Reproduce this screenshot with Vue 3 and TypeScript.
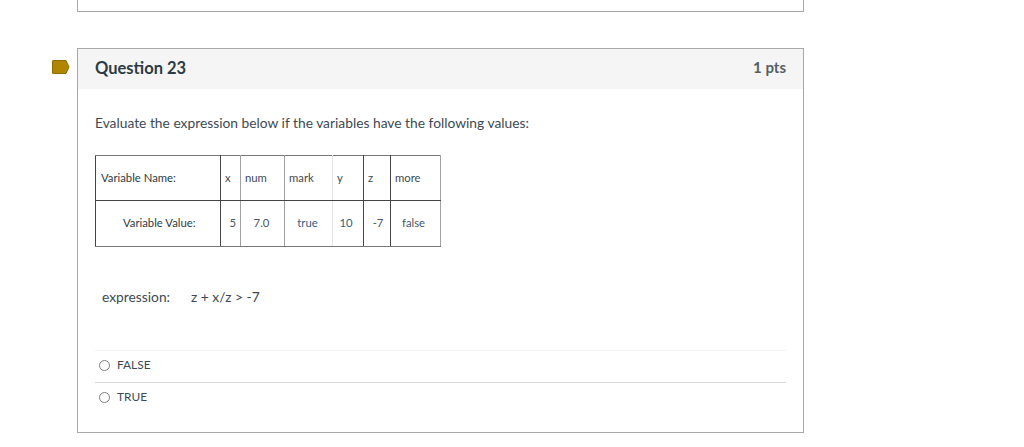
<template>
  <div class="page">
    <div class="prev-box"></div>

    <section class="question">
      <svg class="flag" width="18" height="14" viewBox="0 0 18 14">
        <path d="M1 0.5H14L17 7L14 13.5H1Q0.5 13.5 0.5 13V1Q0.5 0.5 1 0.5Z" fill="#b08600" stroke="#8f6d00" />
      </svg>

      <header class="question-header">
        <h2>Question 23</h2>
        <span class="pts">1 pts</span>
      </header>

      <div class="question-body">
        <p class="intro">Evaluate the expression below if the variables have the following values:</p>

        <table class="vars">
          <tbody>
            <tr>
              <td class="name-cell">Variable Name:</td>
              <td v-for="col in columns" :key="col.name" class="head" :class="col.cls">{{ col.name }}</td>
            </tr>
            <tr>
              <td class="value-cell">Variable Value:</td>
              <td v-for="col in columns" :key="col.name" class="val" :class="[col.cls, { blue: col.blue }]">{{ col.value }}</td>
            </tr>
          </tbody>
        </table>

        <p class="expression"><span>expression:</span><span>z + x/z &gt; -7</span></p>

        <div class="answers">
          <label v-for="answer in answers" :key="answer" class="answer">
            <span class="radio"></span>
            <span class="answer-text">{{ answer }}</span>
          </label>
        </div>
      </div>
    </section>
  </div>
</template>

<script setup lang="ts">
interface Column {
  name: string
  value: string
  cls: string
  blue?: boolean
}

const columns: Column[] = [
  { name: 'x', value: '5', cls: 'c-x' },
  { name: 'num', value: '7.0', cls: 'c-num' },
  { name: 'mark', value: 'true', cls: 'c-mark', blue: true },
  { name: 'y', value: '10', cls: 'c-y', blue: true },
  { name: 'z', value: '-7', cls: 'c-z' },
  { name: 'more', value: 'false', cls: 'c-more' }
]

const answers: string[] = ['FALSE', 'TRUE']
</script>

<style>
html,
body {
  margin: 0;
  background: #fff;
}
</style>

<style scoped>
.page {
  width: 1024px;
  height: 447px;
  overflow: hidden;
  font-family: Lato, "Liberation Sans", sans-serif;
  color: #3d4a54;
  box-sizing: border-box;
  padding-left: 77px;
}

.prev-box {
  width: 727px;
  height: 12px;
  box-sizing: border-box;
  border: 1px solid #a8a8a8;
  border-top: none;
  margin-bottom: 36px;
}

.question {
  position: relative;
  width: 727px;
  height: 385px;
  box-sizing: border-box;
  border: 1px solid #a8a8a8;
}

.flag {
  position: absolute;
  left: -26px;
  top: 11px;
}

.question-header {
  display: flex;
  align-items: center;
  justify-content: space-between;
  height: 40px;
  box-sizing: border-box;
  padding: 0 17px 3px 17px;
  background: #f5f5f5;
}

.question-header h2 {
  margin: 0;
  font-size: 16.5px;
  font-weight: 700;
  color: #2d3b45;
}

.pts {
  font-size: 15px;
  font-weight: 700;
  color: #555f68;
  position: relative;
  top: -1px;
}

.question-body {
  padding: 0 17px;
}

.intro {
  margin: 0;
  padding-top: 25px;
  font-size: 13.8px;
  line-height: 18px;
  height: 18px;
}

.vars {
  margin-top: 23px;
  border-collapse: collapse;
  font-size: 11.3px;
  color: #3d4a54;
  table-layout: fixed;
  width: 346px;
}

.vars tr:first-child td {
  border-top-color: #777;
}

.vars tr:last-child td {
  height: 46px;
  border-bottom-color: #777;
}

.vars td {
  height: 45px;
  padding: 0 0 2px;
  border: 1px solid #444;
  text-align: center;
  box-sizing: border-box;
}

.vars .head {
  text-align: left;
  padding-left: 4px;
}

.vars .name-cell {
  width: 125px;
  text-align: left;
  padding-left: 5px;
  color: #2d3b45;
}

.vars .value-cell {
  text-align: left;
  padding-left: 27px;
  color: #2d3b45;
}

.vars .val {
  color: #4a5660;
}

.vars .blue {
  color: #2f5f85;
}

.vars .c-x {
  width: 20px;
  border-right-color: #a0a0a0;
}

.vars .c-x.val {
  text-align: right;
  padding-right: 4px;
}

.vars .c-num {
  width: 44px;
  border-right-color: #a0a0a0;
}

.vars .c-num.val,
.vars .c-mark.val {
  padding-right: 2px;
}

.vars .c-mark {
  width: 48px;
  border-right-color: #e4e4e4;
}

.vars .c-y {
  width: 31px;
}

.vars .c-y.val,
.vars .c-more.val {
  padding-right: 4px;
}

.vars .c-z {
  width: 27px;
}

.vars .c-z.val {
  padding-left: 2px;
}

.vars .c-more {
  width: 50px;
  border-right-color: #a0a0a0;
}

.expression {
  display: flex;
  gap: 21px;
  margin: 0;
  padding: 41px 0 0 7px;
  font-size: 13.8px;
  line-height: 18px;
  height: 18px;
}

.answers {
  margin-top: 44px;
  border-top: 1px solid #f2f2f2;
}

.answer {
  display: flex;
  align-items: center;
  gap: 7px;
  height: 31px;
  box-sizing: border-box;
  padding: 0 0 2px 4px;
  font-size: 11.9px;
  color: #3d4a54;
}

.answer-text {
  position: relative;
  top: -1px;
}

.answer + .answer {
  border-top: 1px solid #d9d9d9;
}

.radio {
  width: 11px;
  height: 11px;
  box-sizing: border-box;
  border: 1px solid #808080;
  border-radius: 50%;
  background: #fff;
}
</style>
